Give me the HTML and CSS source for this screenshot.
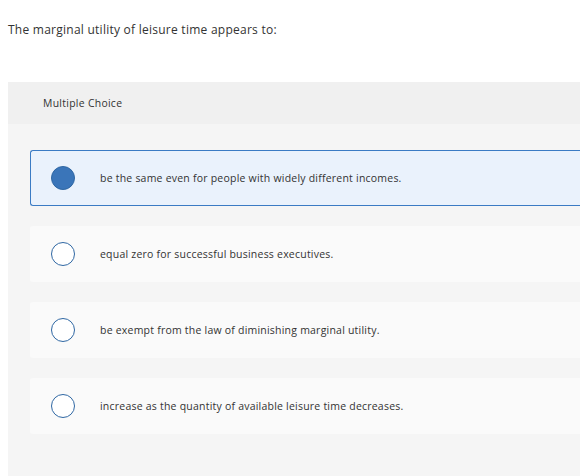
FILE: index.html
```html
<!DOCTYPE html>
<html>
<head>
<meta charset="utf-8">
<link rel="stylesheet" href="styles.css">
</head>
<body>
<p class="question">The marginal utility of leisure time appears to:</p>
<div class="panel">
  <div class="panel-header">Multiple Choice</div>
  <div class="panel-body">
    <div class="option selected"><span class="radio"></span><span class="label">be the same even for people with widely different incomes.</span></div>
    <div class="option"><span class="radio"></span><span class="label">equal zero for successful business executives.</span></div>
    <div class="option"><span class="radio"></span><span class="label">be exempt from the law of diminishing marginal utility.</span></div>
    <div class="option"><span class="radio"></span><span class="label">increase as the quantity of available leisure time decreases.</span></div>
  </div>
</div>
</body>
</html>
```
FILE: styles.css
```css
html, body {
  margin: 0;
  padding: 0;
  background: #ffffff;
  overflow: hidden;
  height: 476px;
}
body {
  font-family: "Open Sans", Lato, sans-serif;
  color: #333333;
}
.question {
  margin: 0;
  padding: 22px 0 0 8px;
  height: 82px;
  box-sizing: border-box;
  font-size: 12px;
  letter-spacing: 0.25px;
  line-height: 16px;
  color: #333;
}
.panel {
  margin-left: 8px;
}
.panel-header {
  background: #f0f0f0;
  height: 42px;
  padding-left: 35px;
  font-size: 10.4px;
  letter-spacing: 0.3px;
  line-height: 42px;
  color: #333;
  box-sizing: border-box;
}
.panel-body {
  background: #f5f5f5;
  padding: 26px 0 60px 22px;
  display: flex;
  flex-direction: column;
  gap: 20px;
}
.option {
  display: flex;
  align-items: center;
  height: 56px;
  box-sizing: border-box;
  background: #fafafa;
  border-radius: 3px 0 0 3px;
  padding-left: 21px;
}
.option.selected {
  background: #eaf2fc;
  border: 1px solid #3b7bc4;
  border-right: none;
  padding-left: 20px;
}
.radio {
  width: 24px;
  height: 24px;
  box-sizing: border-box;
  border-radius: 50%;
  border: 1.5px solid #2f67a3;
  background: #ffffff;
  flex: none;
}
.selected .radio {
  background: #3a75b9;
  border-color: #2f67a3;
}
.label {
  margin-left: 25px;
  font-size: 10.5px;
  letter-spacing: 0.22px;
  color: #333;
}
```
